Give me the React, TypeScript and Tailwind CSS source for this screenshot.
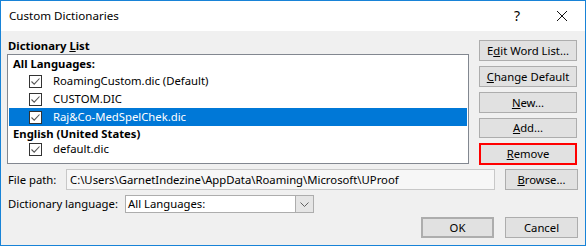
import React from "react";

const font = { fontFamily: '"Segoe UI", "Noto Sans", "Liberation Sans", sans-serif' };

const Check = () => (
  <span className="flex h-[13px] w-[13px] items-center justify-center border border-[#333333] bg-white">
    <svg width="11" height="11" viewBox="0 0 11 11" fill="none">
      <path d="M1.5 5.5 L4.2 8.2 L9.5 2.5" stroke="#555555" strokeWidth="1.1" />
    </svg>
  </span>
);

const Item = ({ label, selected = false }: { label: string; selected?: boolean }) => (
  <div
    className={
      "flex h-[18px] items-center pl-[20px] " +
      (selected ? "bg-[#0078d7] text-white" : "text-black")
    }
  >
    <Check />
    <span className="ml-[11px]">{label}</span>
  </div>
);

const Btn = ({
  children,
  className = "",
}: {
  children: React.ReactNode;
  className?: string;
}) => (
  <div
    className={
      "flex items-center justify-center border border-[#adadad] bg-[#e1e1e1] text-black " +
      className
    }
  >
    {children}
  </div>
);

export default function App() {
  return (
    <div
      className="flex h-[246px] w-[586px] flex-col border border-[#1883d7] bg-[#f0f0f0] text-[11.3px] leading-none text-black"
      style={font}
    >
      {/* title bar */}
      <div className="flex h-[30px] shrink-0 items-center bg-white pl-[8px] text-[11.6px]">
        <span className="flex-1">Custom Dictionaries</span>
        <span className="mr-[36px] text-[14px]">?</span>
        <svg width="12" height="12" viewBox="0 0 12 12" className="mr-[17px]">
          <path d="M1 1 L11 11 M11 1 L1 11" stroke="#111" strokeWidth="1" />
        </svg>
      </div>

      <div className="flex px-[6px]">
        {/* left column */}
        <div className="flex w-[462px] flex-col">
          <div className="mt-[8px] flex h-[14px] items-center pl-[1px] font-bold">
            <span>
              Dictionary <span className="underline">L</span>ist
            </span>
          </div>
          <div className="mt-[1px] h-[110px] border border-[#828790] bg-white px-[1px] pt-[1px]">
            <div className="flex h-[16px] items-center pl-[4px] font-bold">All Languages:</div>
            <Item label="RoamingCustom.dic (Default)" />
            <Item label="CUSTOM.DIC" />
            <Item label="Raj&Co-MedSpelChek.dic" selected />
            <div className="flex h-[15px] items-center pl-[4px] font-bold">English (United States)</div>
            <div className="-mt-[1px]">
              <Item label="default.dic" />
            </div>
          </div>
        </div>

        {/* right buttons */}
        <div className="ml-[10px] mt-[9px] flex w-[98px] flex-col">
          <Btn className="h-[21px]">
            <span>
              E<span className="underline">d</span>it Word List...
            </span>
          </Btn>
          <Btn className="mt-[5px] h-[21px]">
            <span>
              <span className="underline">C</span>hange Default
            </span>
          </Btn>
          <Btn className="mt-[5px] h-[21px]">
            <span>
              <span className="underline">N</span>ew...
            </span>
          </Btn>
          <Btn className="mt-[5px] h-[20px]">
            <span>
              <span className="underline">A</span>dd...
            </span>
          </Btn>
          <Btn className="mt-[5px] h-[22px] border-2 border-[#ff0000]">
            <span>
              <span className="underline">R</span>emove
            </span>
          </Btn>
        </div>
      </div>

      {/* file path */}
      <div className="mt-[4px] flex items-center pl-[7px]">
        <span className="w-[58px]">File path:</span>
        <div className="flex h-[21px] w-[429px] items-center border border-[#c8c8c8] bg-[#f7f7f7] pl-[3px]">
          C:\Users\GarnetIndezine\AppData\Roaming\Microsoft\UProof
        </div>
        <Btn className="ml-[10px] h-[21px] w-[73px]">
          <span>
            <span className="underline">B</span>rowse...
          </span>
        </Btn>
      </div>

      {/* language */}
      <div className="mt-[5px] flex items-center pl-[7px]">
        <span className="w-[117px]">
          Dictionary lan<span className="underline">g</span>uage:
        </span>
        <div className="flex h-[18px] w-[189px] border border-[#adadad] bg-white">
          <span className="flex flex-1 items-center pl-[2px]">All Languages:</span>
          <span className="flex w-[18px] items-center justify-center border-l border-[#adadad] bg-[#e5e5e5]">
            <svg width="9" height="5" viewBox="0 0 9 5">
              <path d="M0.5 0.5 L4.5 4.5 L8.5 0.5" stroke="#606060" fill="none" strokeWidth="1" />
            </svg>
          </span>
        </div>
      </div>

      {/* ok / cancel */}
      <div className="mt-[4px] flex justify-end pr-[7px]">
        <Btn className="h-[21px] w-[73px] border-2 border-[#0078d7]">OK</Btn>
        <Btn className="ml-[11px] h-[21px] w-[73px]">Cancel</Btn>
      </div>
    </div>
  );
}
